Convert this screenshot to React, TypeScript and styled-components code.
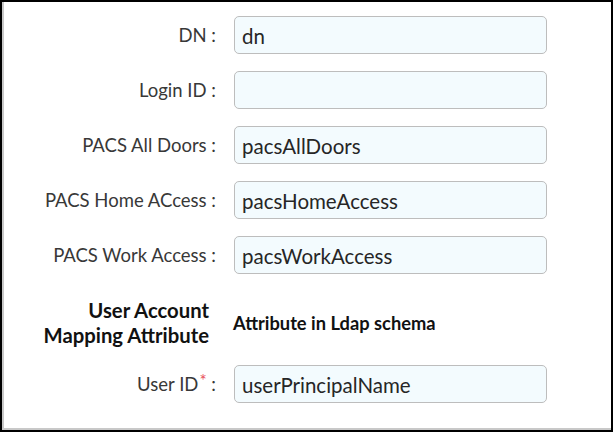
import React from "react";
import styled, { createGlobalStyle } from "styled-components";

const GlobalStyle = createGlobalStyle`
	html, body {
		margin: 0;
		padding: 0;
		background: #ffffff;
	}
	body {
		font-family: Lato, "Open Sans", sans-serif;
	}
`;

const Frame = styled.div`
	width: 613px;
	height: 432px;
	box-sizing: border-box;
	border: 2px solid #000;
	background: #fff;
	overflow: hidden;
`;

const Panel = styled.div`
	height: 100%;
	box-sizing: border-box;
	border-left: 2px solid #c8c8c8;
	border-bottom: 2px solid #c8c8c8;
	padding-top: 14px;
`;

const Form = styled.div`
	display: grid;
	grid-template-columns: 212px 313px;
	column-gap: 18px;
	row-gap: 17px;
	align-items: center;
`;

const Label = styled.label`
	justify-self: end;
	font-size: 18.5px;
	color: #383838;
	white-space: nowrap;
`;

const Star = styled.span`
	color: #e8505b;
	font-size: 17px;
	position: relative;
	top: -4px;
	margin-left: 1px;
`;

const Input = styled.input`
	box-sizing: border-box;
	width: 313px;
	height: 38px;
	padding: 2px 7px 0;
	border: 1.5px solid #bdbdbd;
	border-radius: 5px;
	background: #f3fbfe;
	font-family: inherit;
	font-size: 20.5px;
	color: #262626;
	outline: none;
`;

const HeaderTitle = styled.div`
	justify-self: end;
	text-align: right;
	font-weight: 700;
	font-size: 20.3px;
	line-height: 25px;
	color: #111;
	padding-right: 7px;
	margin-top: 7px;
`;

const HeaderSub = styled.div`
	font-weight: 700;
	font-size: 18.3px;
	color: #111;
	margin-top: 7px;
	margin-left: -1px;
`;

const fields = [
	{ label: "DN", value: "dn" },
	{ label: "Login ID", value: "" },
	{ label: "PACS All Doors", value: "pacsAllDoors" },
	{ label: "PACS Home ACcess", value: "pacsHomeAccess" },
	{ label: "PACS Work Access", value: "pacsWorkAccess" },
];

export default function App() {
	return (
		<>
			<GlobalStyle />
			<Frame>
				<Panel>
					<Form>
						{fields.map((f) => (
							<React.Fragment key={f.label}>
								<Label>{f.label} :</Label>
								<Input defaultValue={f.value} />
							</React.Fragment>
						))}
						<HeaderTitle>
							User Account
							<br />
							Mapping Attribute
						</HeaderTitle>
						<HeaderSub>Attribute in Ldap schema</HeaderSub>
						<Label>
							User ID<Star>*</Star> :
						</Label>
						<Input defaultValue="userPrincipalName" />
					</Form>
				</Panel>
			</Frame>
		</>
	);
}
